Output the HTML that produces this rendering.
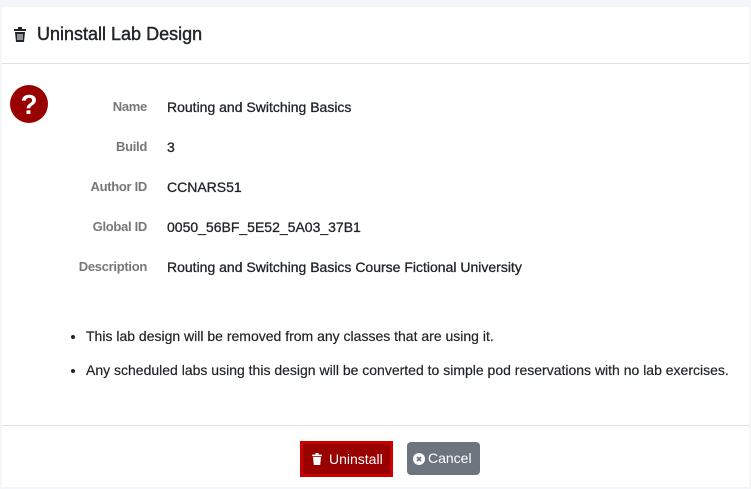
<!DOCTYPE html>
<html><head><style>
html,body{margin:0;padding:0;width:751px;height:489px;background:#f4f7fa;font-family:"Liberation Sans",sans-serif;overflow:hidden}
.card{position:absolute;left:2px;top:7px;width:747px;height:480px;background:#fff}
.hdr{position:absolute;left:0;top:0;width:747px;height:56px;border-bottom:1px solid #dee2e6}
.title{position:absolute;left:35px;top:17px;font-size:18px;color:#212529;-webkit-text-stroke:0.4px #212529}
.row{position:absolute;left:0;width:747px;height:20px;font-size:14px;line-height:20px}
.lbl{position:absolute;right:602px;font-weight:bold;color:#777;font-size:13px;letter-spacing:-0.3px}
.val{position:absolute;left:165px;color:#212529;-webkit-text-stroke:0.3px #212529}
ul{position:absolute;left:58px;top:318px;margin:0;padding:0 0 0 26px;font-size:14px;color:#212529;-webkit-text-stroke:0.2px #212529}
li{height:34px;line-height:22px}
.ftr{position:absolute;left:0;top:418px;width:747px;border-top:1px solid #dee2e6}
.b1{position:absolute;left:298px;top:434px;width:87px;height:30px;background:#990000;border:3px solid #cc0000;color:#fff;font-size:14px;line-height:30px}
.b2{position:absolute;left:405px;top:435px;width:73px;height:33px;background:#6c757d;border-radius:4px;color:#fff;font-size:14px;line-height:33px}
</style></head><body>
<div class="card">
 <div class="hdr">
  <svg style="position:absolute;left:12px;top:20px" width="12" height="15" viewBox="0 0 12 15"><rect x="0" y="2" width="12" height="2" fill="#212529"/><rect x="4" y="0" width="4" height="2" fill="#212529"/><path d="M1 5h10l-1 10H2z" fill="#212529"/><rect x="3.5" y="7" width="1" height="6" fill="#fff"/><rect x="5.5" y="7" width="1" height="6" fill="#fff"/><rect x="7.5" y="7" width="1" height="6" fill="#fff"/></svg>
  <div class="title">Uninstall Lab Design</div>
 </div>
 <svg style="position:absolute;left:8px;top:78px" width="38" height="38" viewBox="0 0 38 38"><circle cx="19" cy="19" r="19" fill="#990000"/><text x="19" y="29" text-anchor="middle" font-family="Liberation Sans" font-weight="bold" font-size="28" fill="#fff">?</text></svg>
 <div class="row" style="top:90px"><span class="lbl">Name</span><span class="val">Routing and Switching Basics</span></div>
 <div class="row" style="top:130px"><span class="lbl">Build</span><span class="val">3</span></div>
 <div class="row" style="top:170px"><span class="lbl">Author ID</span><span class="val">CCNARS51</span></div>
 <div class="row" style="top:210px"><span class="lbl">Global ID</span><span class="val">0050_56BF_5E52_5A03_37B1</span></div>
 <div class="row" style="top:250px"><span class="lbl">Description</span><span class="val">Routing and Switching Basics Course Fictional University</span></div>
 <ul><li>This lab design will be removed from any classes that are using it.</li><li>Any scheduled labs using this design will be converted to simple pod reservations with no lab exercises.</li></ul>
 <div class="ftr"></div>
 <div class="b1"><svg style="position:absolute;left:9px;top:9px" width="10" height="12" viewBox="0 0 12 15"><rect x="0" y="2" width="12" height="2" fill="#fff"/><rect x="4" y="0" width="4" height="2" fill="#fff"/><path d="M1 5h10l-1 10H2z" fill="#fff"/></svg><span style="position:absolute;left:26px">Uninstall</span></div>
 <div class="b2"><svg style="position:absolute;left:6px;top:11px" width="12" height="12" viewBox="0 0 12 12"><circle cx="6" cy="6" r="6" fill="#fff"/><path d="M4 4l4 4M8 4l-4 4" stroke="#6c757d" stroke-width="1.8"/></svg><span style="position:absolute;left:21px">Cancel</span></div>
</div>
</body></html>
